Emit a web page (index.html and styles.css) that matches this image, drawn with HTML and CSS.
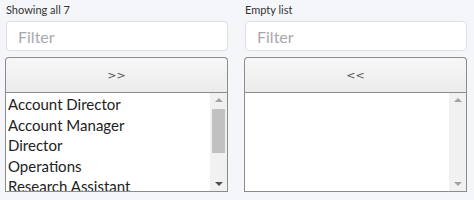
FILE: index.html
```html
<!DOCTYPE html>
<html lang="en">
<head>
  <meta charset="UTF-8" />
  <title>Dual list</title>
  <link rel="stylesheet" href="styles.css">
</head>
<body>
  <div class="dual">
    <div class="side">
      <div class="info">Showing all 7</div>
      <input class="filter" type="text" placeholder="Filter">
      <button class="move-btn">&gt;&gt;</button>
      <div class="box">
        <div class="items">
          <div class="item">Account Director</div>
          <div class="item">Account Manager</div>
          <div class="item">Director</div>
          <div class="item">Operations</div>
          <div class="item">Research Assistant</div>
        </div>
        <div class="bar">
          <span class="arrow up"></span>
          <div class="track"><div class="thumb"></div></div>
          <span class="arrow down"></span>
        </div>
      </div>
    </div>
    <div class="side">
      <div class="info">Empty list</div>
      <input class="filter" type="text" placeholder="Filter">
      <button class="move-btn">&lt;&lt;</button>
      <div class="box">
        <div class="items"></div>
        <div class="bar">
          <span class="arrow up off"></span>
          <div class="track"></div>
          <span class="arrow down off"></span>
        </div>
      </div>
    </div>
  </div>
</body>
</html>
```

FILE: styles.css
```css
body {
  margin: 0;
  background-color: #f4f6f9;
  font-family: 'Lato', 'Liberation Sans', sans-serif;
  color: #222;
}
.dual {
  display: flex;
  gap: 16px;
  padding: 2px 7px 0 5px;
}
.side {
  width: 223px;
  display: flex;
  flex-direction: column;
}
.info {
  font-size: 11px;
  height: 18px;
  line-height: 15px;
  padding-left: 1px;
  color: #333;
}
.filter {
  box-sizing: border-box;
  width: 222px;
  height: 30px;
  margin: 1px 0 6px 1px;
  border: 1px solid #dde0e4;
  border-radius: 4px;
  background: #fff;
  padding: 0 11px;
  font-family: inherit;
  font-size: 16px;
  outline: none;
}
.filter::placeholder {
  color: #a7a9ac;
}
.move-btn {
  height: 35px;
  border: 1px solid #8c8c8c;
  border-bottom: none;
  border-radius: 4px 4px 0 0;
  background: linear-gradient(#f7f7f7, #ececec);
  font-family: 'DejaVu Sans', sans-serif;
  font-size: 11px;
  color: #555;
  cursor: pointer;
}
.box {
  display: flex;
  height: 98px;
  border: 1px solid #8c8c8c;
  background: #fff;
  overflow: hidden;
}
.items {
  flex: 1;
  padding-top: 1px;
}
.item {
  font-size: 15px;
  height: 20.5px;
  line-height: 20px;
  padding-left: 2px;
  white-space: nowrap;
}
.bar {
  width: 17px;
  background: #f1f1f1;
  display: flex;
  flex-direction: column;
}
.track {
  flex: 1;
  padding: 0 2px;
}
.thumb {
  height: 44px;
  margin-top: 2px;
  background: #c1c1c1;
}
.arrow {
  height: 14px;
  display: flex;
  align-items: center;
  justify-content: center;
}
.arrow::after {
  content: '';
  border-left: 4px solid transparent;
  border-right: 4px solid transparent;
}
.up::after {
  border-bottom: 4px solid #a3a3a3;
}
.down::after {
  border-top: 4px solid #505050;
}
.off.down::after {
  border-top-color: #a3a3a3;
}
```
